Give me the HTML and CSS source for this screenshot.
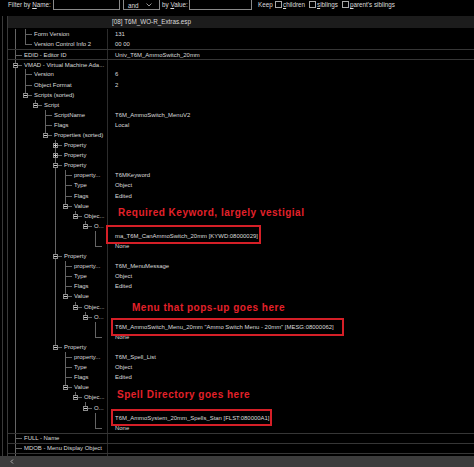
FILE: index.html
```html
<!DOCTYPE html>
<html>
<head>
<meta charset="utf-8">
<link rel="stylesheet" href="styles.css">
</head>
<body>
<div class="app">
  <div class="filter">
    <span class="fl l1">Filter by <u>N</u>ame:</span>
    <span class="inp i1"></span>
    <span class="combo"><span class="ct">and</span><svg class="chev" width="6" height="4" viewBox="0 0 6 4"><polyline points="0.5,0.5 3,3 5.5,0.5" fill="none" stroke="#bbb" stroke-width="0.8"/></svg></span>
    <span class="fl l2">by <u>V</u>alue:</span>
    <span class="inp i2"></span>
    <span class="fl l3">Keep</span>
    <span class="cb"></span><span class="fl l4"><u>c</u>hildren</span>
    <span class="cb"></span><span class="fl l5"><u>s</u>iblings</span>
    <span class="cb"></span><span class="fl l6"><u>p</u>arent's siblings</span>
  </div>
  <div class="main">
    <div class="grid">
      <div class="head">[08] T6M_WO-R_Extras.esp</div>
      <div class="rows">
        <div class="row"><div class="nm"><span class="g v"></span><span class="g t"></span><span class="lb">Form Version</span></div><div class="val">131</div></div>
        <div class="row"><div class="nm"><span class="g v"></span><span class="g e"></span><span class="lb">Version Control Info 2</span></div><div class="val">00 00</div></div>
        <div class="row top"><div class="nm"><span class="g t"></span><span class="lb">EDID - Editor ID</span></div><div class="val">Univ_T6M_AmmoSwitch_20mm</div></div>
        <div class="row top"><div class="nm"><span class="g t"><i class="bx"></i></span><span class="lb">VMAD - Virtual Machine Ada...</span></div><div class="val"></div></div>
        <div class="row"><div class="nm"><span class="g v"></span><span class="g t"></span><span class="lb">Version</span></div><div class="val">6</div></div>
        <div class="row"><div class="nm"><span class="g v"></span><span class="g t"></span><span class="lb">Object Format</span></div><div class="val">2</div></div>
        <div class="row"><div class="nm"><span class="g v"></span><span class="g e"><i class="bx"></i></span><span class="lb">Scripts (sorted)</span></div><div class="val"></div></div>
        <div class="row"><div class="nm"><span class="g v"></span><span class="g"></span><span class="g e"><i class="bx"></i></span><span class="lb">Script</span></div><div class="val"></div></div>
        <div class="row"><div class="nm"><span class="g v"></span><span class="g"></span><span class="g"></span><span class="g t"></span><span class="lb">ScriptName</span></div><div class="val">T6M_AmmoSwitch_MenuV2</div></div>
        <div class="row"><div class="nm"><span class="g v"></span><span class="g"></span><span class="g"></span><span class="g t"></span><span class="lb">Flags</span></div><div class="val">Local</div></div>
        <div class="row"><div class="nm"><span class="g v"></span><span class="g"></span><span class="g"></span><span class="g e"><i class="bx"></i></span><span class="lb">Properties (sorted)</span></div><div class="val"></div></div>
        <div class="row"><div class="nm"><span class="g v"></span><span class="g"></span><span class="g"></span><span class="g"></span><span class="g t"><i class="bx p"></i></span><span class="lb">Property</span></div><div class="val"></div></div>
        <div class="row"><div class="nm"><span class="g v"></span><span class="g"></span><span class="g"></span><span class="g"></span><span class="g t"><i class="bx p"></i></span><span class="lb">Property</span></div><div class="val"></div></div>
        <div class="row"><div class="nm"><span class="g v"></span><span class="g"></span><span class="g"></span><span class="g"></span><span class="g t"><i class="bx"></i></span><span class="lb">Property</span></div><div class="val"></div></div>
        <div class="row"><div class="nm"><span class="g v"></span><span class="g"></span><span class="g"></span><span class="g"></span><span class="g v"></span><span class="g t"></span><span class="lb">property...</span></div><div class="val">T6MKeyword</div></div>
        <div class="row"><div class="nm"><span class="g v"></span><span class="g"></span><span class="g"></span><span class="g"></span><span class="g v"></span><span class="g t"></span><span class="lb">Type</span></div><div class="val">Object</div></div>
        <div class="row"><div class="nm"><span class="g v"></span><span class="g"></span><span class="g"></span><span class="g"></span><span class="g v"></span><span class="g t"></span><span class="lb">Flags</span></div><div class="val">Edited</div></div>
        <div class="row"><div class="nm"><span class="g v"></span><span class="g"></span><span class="g"></span><span class="g"></span><span class="g v"></span><span class="g e"><i class="bx"></i></span><span class="lb">Value</span></div><div class="val"></div></div>
        <div class="row"><div class="nm"><span class="g v"></span><span class="g"></span><span class="g"></span><span class="g"></span><span class="g v"></span><span class="g"></span><span class="g e"><i class="bx"></i></span><span class="lb">Objec...</span></div><div class="val"></div></div>
        <div class="row"><div class="nm"><span class="g v"></span><span class="g"></span><span class="g"></span><span class="g"></span><span class="g v"></span><span class="g"></span><span class="g"></span><span class="g e"><i class="bx"></i></span><span class="lb">O...</span></div><div class="val"></div></div>
        <div class="row"><div class="nm"><span class="g v"></span><span class="g"></span><span class="g"></span><span class="g"></span><span class="g v"></span><span class="g"></span><span class="g"></span><span class="g"></span><span class="g v"></span></div><div class="val">ma_T6M_CanAmmoSwitch_20mm [KYWD:08000029]</div></div>
        <div class="row"><div class="nm"><span class="g v"></span><span class="g"></span><span class="g"></span><span class="g"></span><span class="g v"></span><span class="g"></span><span class="g"></span><span class="g"></span><span class="g e"></span></div><div class="val">None</div></div>
        <div class="row"><div class="nm"><span class="g v"></span><span class="g"></span><span class="g"></span><span class="g"></span><span class="g t"><i class="bx"></i></span><span class="lb">Property</span></div><div class="val"></div></div>
        <div class="row"><div class="nm"><span class="g v"></span><span class="g"></span><span class="g"></span><span class="g"></span><span class="g v"></span><span class="g t"></span><span class="lb">property...</span></div><div class="val">T6M_MenuMessage</div></div>
        <div class="row"><div class="nm"><span class="g v"></span><span class="g"></span><span class="g"></span><span class="g"></span><span class="g v"></span><span class="g t"></span><span class="lb">Type</span></div><div class="val">Object</div></div>
        <div class="row"><div class="nm"><span class="g v"></span><span class="g"></span><span class="g"></span><span class="g"></span><span class="g v"></span><span class="g t"></span><span class="lb">Flags</span></div><div class="val">Edited</div></div>
        <div class="row"><div class="nm"><span class="g v"></span><span class="g"></span><span class="g"></span><span class="g"></span><span class="g v"></span><span class="g e"><i class="bx"></i></span><span class="lb">Value</span></div><div class="val"></div></div>
        <div class="row"><div class="nm"><span class="g v"></span><span class="g"></span><span class="g"></span><span class="g"></span><span class="g v"></span><span class="g"></span><span class="g e"><i class="bx"></i></span><span class="lb">Objec...</span></div><div class="val"></div></div>
        <div class="row"><div class="nm"><span class="g v"></span><span class="g"></span><span class="g"></span><span class="g"></span><span class="g v"></span><span class="g"></span><span class="g"></span><span class="g e"><i class="bx"></i></span><span class="lb">O...</span></div><div class="val"></div></div>
        <div class="row"><div class="nm"><span class="g v"></span><span class="g"></span><span class="g"></span><span class="g"></span><span class="g v"></span><span class="g"></span><span class="g"></span><span class="g"></span><span class="g v"></span></div><div class="val">T6M_AmmoSwitch_Menu_20mm "Ammo Switch Menu - 20mm" [MESG:08000062]</div></div>
        <div class="row"><div class="nm"><span class="g v"></span><span class="g"></span><span class="g"></span><span class="g"></span><span class="g v"></span><span class="g"></span><span class="g"></span><span class="g"></span><span class="g e"></span></div><div class="val">None</div></div>
        <div class="row"><div class="nm"><span class="g v"></span><span class="g"></span><span class="g"></span><span class="g"></span><span class="g e"><i class="bx"></i></span><span class="lb">Property</span></div><div class="val"></div></div>
        <div class="row"><div class="nm"><span class="g v"></span><span class="g"></span><span class="g"></span><span class="g"></span><span class="g"></span><span class="g t"></span><span class="lb">property...</span></div><div class="val">T6M_Spell_List</div></div>
        <div class="row"><div class="nm"><span class="g v"></span><span class="g"></span><span class="g"></span><span class="g"></span><span class="g"></span><span class="g t"></span><span class="lb">Type</span></div><div class="val">Object</div></div>
        <div class="row"><div class="nm"><span class="g v"></span><span class="g"></span><span class="g"></span><span class="g"></span><span class="g"></span><span class="g t"></span><span class="lb">Flags</span></div><div class="val">Edited</div></div>
        <div class="row"><div class="nm"><span class="g v"></span><span class="g"></span><span class="g"></span><span class="g"></span><span class="g"></span><span class="g e"><i class="bx"></i></span><span class="lb">Value</span></div><div class="val"></div></div>
        <div class="row"><div class="nm"><span class="g v"></span><span class="g"></span><span class="g"></span><span class="g"></span><span class="g"></span><span class="g"></span><span class="g e"><i class="bx"></i></span><span class="lb">Objec...</span></div><div class="val"></div></div>
        <div class="row"><div class="nm"><span class="g v"></span><span class="g"></span><span class="g"></span><span class="g"></span><span class="g"></span><span class="g"></span><span class="g"></span><span class="g e"><i class="bx"></i></span><span class="lb">O...</span></div><div class="val"></div></div>
        <div class="row"><div class="nm"><span class="g v"></span><span class="g"></span><span class="g"></span><span class="g"></span><span class="g"></span><span class="g"></span><span class="g"></span><span class="g"></span><span class="g v"></span></div><div class="val">T6M_AmmoSystem_20mm_Spells_Stan [FLST:080000A1]</div></div>
        <div class="row"><div class="nm"><span class="g v"></span><span class="g"></span><span class="g"></span><span class="g"></span><span class="g"></span><span class="g"></span><span class="g"></span><span class="g"></span><span class="g e"></span></div><div class="val">None</div></div>
        <div class="row top"><div class="nm"><span class="g t"></span><span class="lb">FULL - Name</span></div><div class="val"></div></div>
        <div class="row top"><div class="nm"><span class="g t"></span><span class="lb">MDOB - Menu Display Object</span></div><div class="val"></div></div>
        <div class="row top"><div class="nm"><span class="g t"></span></div><div class="val"></div></div>
      </div>
    </div>
  </div>
  <div class="hscroll"><span class="arrow"><svg width="4" height="5" viewBox="0 0 4 5"><polyline points="3,0.5 1,2.5 3,4.5" fill="none" stroke="#bdbdbd" stroke-width="0.9"/></svg></span></div>
</div>

<div class="note n1">Required Keyword, largely vestigial</div>
<div class="rbox b1"></div>
<div class="note n2">Menu that pops-up goes here</div>
<div class="rbox b2"></div>
<div class="note n3">Spell Directory goes here</div>
<div class="rbox b3"></div>
</body>
</html>
```

FILE: styles.css
```css
* { box-sizing: border-box; margin: 0; padding: 0; }
html, body { background: #000; overflow: hidden; }
body {
  width: 474px;
  height: 467px;
  position: relative;
  font-family: "Liberation Sans", Arial, sans-serif;
  font-size: 6.3px;
  color: #dcdcdc;
}
.app { display: flex; flex-direction: column; height: 467px; }

/* filter bar */
.filter {
  height: 16px;
  flex: none;
  display: flex;
  align-items: flex-start;
  padding-left: 8px;
  white-space: nowrap;
}
.fl { line-height: 10px; display: block; flex: none; }
.l1 { width: 45px; }
.inp {
  display: block;
  flex: none;
  height: 12px;
  margin-top: -2px;
  border: 1px solid #8a8a8a;
  background: #000;
}
.i1 { width: 67px; }
.combo {
  display: flex;
  align-items: center;
  flex: none;
  width: 37px;
  height: 12px;
  margin-top: -2px;
  margin-left: 3px;
  border: 1px solid #8a8a8a;
  padding: 2px 0 0 4px;
}
.ct { flex: 1; }
.chev { margin-right: 7px; margin-top: -1px; }
.l2 { width: 27px; margin-left: 2px; }
.i2 { width: 63px; }
.l3 { width: 17px; margin-left: 6px; }
.cb {
  display: block;
  flex: none;
  width: 7px;
  height: 7px;
  margin-top: 1px;
  margin-right: 1px;
  border: 1px solid #a8a8a8;
}
.l4 { width: 26px; }
.l5 { width: 25px; }

/* main grid */
.main {
  flex: none;
  height: 440px;
  margin-left: 2px;
  border-left: 1px solid #3a3a3a;
  padding-left: 4px;
}
.grid {
  height: 440px;
  border-left: 1px solid #3a3a3a;
  display: flex;
  flex-direction: column;
}
.head {
  flex: none;
  height: 12px;
  margin-bottom: 1px;
  background: #1c1c1c;
  line-height: 12px;
  padding-left: 104px;
  white-space: nowrap;
}
.rows {
  flex: none;
  height: 427px;
  overflow: hidden;
  font-size: 5.95px;
}
.row {
  display: flex;
  height: 10.1px;
  white-space: nowrap;
}
.row.top { border-top: 1px solid #363636; }
.nm {
  flex: none;
  width: 100px;
  display: flex;
  align-items: center;
  padding-left: 2px;
  border-right: 1px solid #2c2c2c;
  overflow: hidden;
}
.val {
  flex: 1;
  display: flex;
  align-items: center;
  padding-left: 7px;
}
.lb { margin-left: 4px; }

.g {
  flex: none;
  width: 10px;
  align-self: stretch;
  position: relative;
}
.v::before, .t::before, .e::before {
  content: "";
  position: absolute;
  left: 5px;
  top: 0;
  bottom: 0;
  width: 1px;
  background: #646464;
}
.e::before { bottom: 50%; }
.t::after, .e::after {
  content: "";
  position: absolute;
  left: 5px;
  top: 50%;
  width: 7px;
  height: 1px;
  background: #646464;
}
.bx {
  position: absolute;
  z-index: 1;
  left: 3px;
  top: 50%;
  width: 5px;
  height: 5px;
  margin-top: -2px;
  border: 1px solid #8c8c8c;
  background: #000;
}
.bx::before {
  content: "";
  position: absolute;
  left: 0;
  top: 1px;
  width: 3px;
  height: 1px;
  background: #d0d0d0;
}
.bx.p::after {
  content: "";
  position: absolute;
  left: 1px;
  top: 0;
  width: 1px;
  height: 3px;
  background: #d0d0d0;
}

/* horizontal scrollbar */
.hscroll {
  flex: none;
  height: 11px;
  background: #3c3c3c;
  display: flex;
  align-items: center;
  padding-left: 10px;
}
.arrow { display: flex; }

/* annotations overlay */
.note {
  position: absolute;
  font-family: "Liberation Sans", Arial, sans-serif;
  font-weight: bold;
  font-size: 10px;
  letter-spacing: 0.5px;
  line-height: 10px;
  color: #e3212a;
  white-space: nowrap;
}
.n1 { left: 118px; top: 208px; }
.n2 { left: 132px; top: 303px; }
.n3 { left: 117px; top: 390px; }
.rbox {
  position: absolute;
  border: 2px solid #d51f27;
}
.b1 { left: 106px; top: 225px; width: 155px; height: 19px; }
.b2 { left: 111px; top: 318px; width: 233px; height: 18px; }
.b3 { left: 111px; top: 409px; width: 161px; height: 17px; }
```
